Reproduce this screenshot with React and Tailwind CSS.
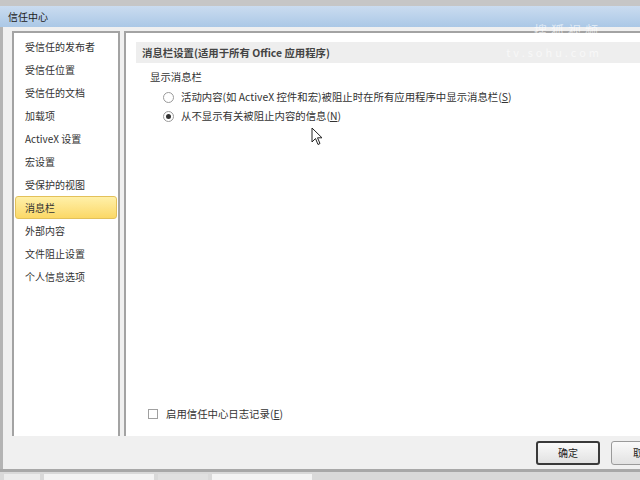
import React from 'react';

const navItems = [
  '受信任的发布者',
  '受信任位置',
  '受信任的文档',
  '加载项',
  'ActiveX 设置',
  '宏设置',
  '受保护的视图',
  '消息栏',
  '外部内容',
  '文件阻止设置',
  '个人信息选项',
];

const Radio = ({ checked }) => (
  <span className="flex h-[11px] w-[11px] items-center justify-center rounded-full border border-[#9a9a9a] bg-white">
    {checked && <span className="h-[5px] w-[5px] rounded-full bg-[#333]" />}
  </span>
);

const TrustCenter = () => {
  const active = '消息栏';

  return (
    <div
      className="relative flex h-[480px] w-[640px] flex-col overflow-hidden bg-[#f0f0f0] text-[10px] text-[#333]"
      style={{ fontFamily: '"Noto Sans CJK SC", "Noto Sans", sans-serif' }}
    >
      <div className="h-[6px] bg-[#c6c6c6]" />
      <div className="flex h-[21px] items-center bg-gradient-to-b from-[#cadcf0] to-[#abc8e6] pl-[8px] text-[10px] text-[#222]">
        信任中心
      </div>

      <div className="flex flex-1 border-l-[3px] border-[#b4b4b4] pt-[4px] pl-[9px]">
        {/* left nav */}
        <div className="flex w-[108px] flex-col border-x-2 border-t-2 border-[#a3a3a3] bg-white pt-[2px]">
          {navItems.map((item) => (
            <div
              key={item}
              className={
                item === active
                  ? 'mx-[1px] flex h-[23px] items-center rounded-[3px] border border-[#e3c15a] bg-gradient-to-b from-[#fff0a8] to-[#fbd865] pl-[9px]'
                  : 'flex h-[23px] items-center pl-[11px]'
              }
            >
              {item}
            </div>
          ))}
        </div>

        {/* right panel */}
        <div className="ml-[4px] flex flex-1 flex-col border-l-2 border-t-2 border-[#a3a3a3] bg-white pt-[9px] pl-[10px] text-[10.4px]">
          <div className="flex h-[21px] items-center bg-[#eeeeee] pl-[6px] font-bold text-[#444]">
            消息栏设置(适用于所有 Office 应用程序)
          </div>
          <div className="mt-[6px] pl-[14px]">显示消息栏</div>
          <div className="mt-[6px] flex flex-col gap-[6px] pl-[27px]">
            <div className="flex h-[13px] items-center gap-[7px]">
              <Radio />
              <span>
                活动内容(如 ActiveX 控件和宏)被阻止时在所有应用程序中显示消息栏(<span className="underline">S</span>)
              </span>
            </div>
            <div className="flex h-[13px] items-center gap-[7px]">
              <Radio checked />
              <span>
                从不显示有关被阻止内容的信息(<span className="underline">N</span>)
              </span>
            </div>
          </div>
          <div className="flex-1" />
          <div className="mb-[14px] flex items-center gap-[8px] pl-[12px]">
            <span className="h-[10px] w-[10px] border border-[#a0a0a0] bg-white" />
            <span>
              启用信任中心日志记录(<span className="underline">E</span>)
            </span>
          </div>
        </div>
      </div>

      {/* bottom buttons */}
      <div className="flex h-[33px] items-center gap-[11px] border-l-[3px] border-[#b4b4b4] pl-[533px]">
        <button className="h-[24px] w-[64px] shrink-0 rounded-[3px] border-2 border-[#3a3a3a] bg-gradient-to-b from-[#fafafa] to-[#e2e2e2] text-[10px] text-[#222]">
          确定
        </button>
        <button className="h-[24px] w-[64px] shrink-0 rounded-[3px] border border-[#9a9a9a] bg-gradient-to-b from-[#fafafa] to-[#e2e2e2] text-[10px] text-[#222]">
          取消
        </button>
      </div>
      <div className="h-[3px] bg-[#a8a8a8]" />
      <div className="flex h-[8px] gap-[4px] bg-[#d9d9d9] pl-[4px] pt-[2px]">
        <span className="w-[36px] bg-[#ececec]" />
        <span className="w-[110px] bg-[#f4f4f4]" />
        <span className="w-[50px] bg-[#e0e0e0]" />
        <span className="w-[100px] bg-[#f4f4f4]" />
      </div>

      {/* watermark */}
      <div className="absolute right-[38px] top-[20px] flex flex-col items-end text-white/60">
        <span className="text-[13px] tracking-[4px]">搜狐视频</span>
        <span className="mt-[4px] text-[11px] tracking-[3px]">tv.sohu.com</span>
      </div>

      {/* mouse cursor */}
      <svg className="absolute left-[311px] top-[127px]" width="12" height="19" viewBox="0 0 12 19">
        <path d="M1 1 L1 15 L4.5 11.5 L7 17.5 L9 16.5 L6.5 10.8 L11 10.8 Z" fill="white" stroke="#222" strokeWidth="1" strokeLinejoin="round" />
      </svg>
    </div>
  );
};

export default function App() {
  return <TrustCenter />;
}
